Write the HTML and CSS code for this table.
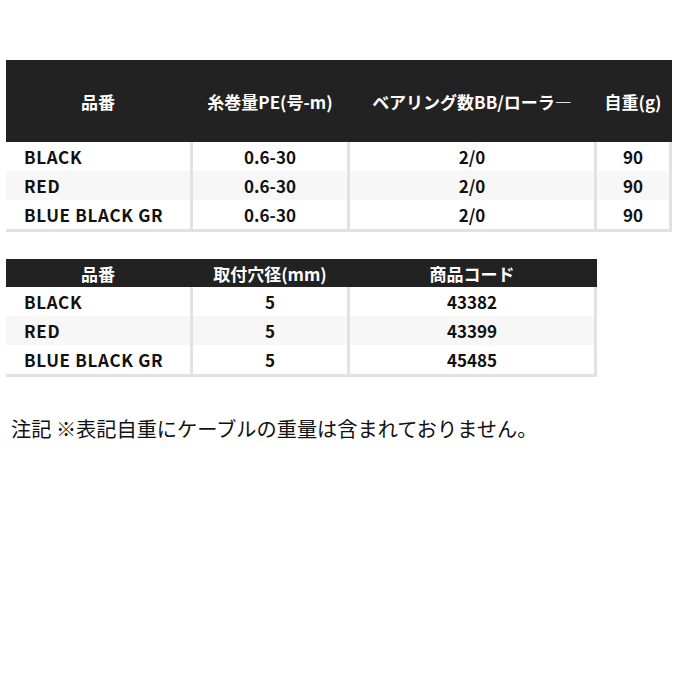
FILE: index.html
```html
<!DOCTYPE html>
<html lang="ja">
<head>
<meta charset="utf-8">
<link rel="stylesheet" href="styles.css">
</head>
<body>
<div class="page">
  <div class="spec spec-main">
    <div class="row head tall">
      <div class="cell">品番</div>
      <div class="cell">糸巻量PE(号-m)</div>
      <div class="cell">ベアリング数BB/ローラ―</div>
      <div class="cell">自重(g)</div>
    </div>
    <div class="row">
      <div class="cell name">BLACK</div>
      <div class="cell">0.6-30</div>
      <div class="cell">2/0</div>
      <div class="cell">90</div>
    </div>
    <div class="row alt">
      <div class="cell name">RED</div>
      <div class="cell">0.6-30</div>
      <div class="cell">2/0</div>
      <div class="cell">90</div>
    </div>
    <div class="row">
      <div class="cell name">BLUE BLACK GR</div>
      <div class="cell">0.6-30</div>
      <div class="cell">2/0</div>
      <div class="cell">90</div>
    </div>
  </div>

  <div class="spec spec-code">
    <div class="row head">
      <div class="cell">品番</div>
      <div class="cell">取付穴径(mm)</div>
      <div class="cell">商品コード</div>
    </div>
    <div class="row">
      <div class="cell name">BLACK</div>
      <div class="cell">5</div>
      <div class="cell">43382</div>
    </div>
    <div class="row alt">
      <div class="cell name">RED</div>
      <div class="cell">5</div>
      <div class="cell">43399</div>
    </div>
    <div class="row">
      <div class="cell name">BLUE BLACK GR</div>
      <div class="cell">5</div>
      <div class="cell">45485</div>
    </div>
  </div>

  <p class="note">注記 ※表記自重にケーブルの重量は含まれておりません。</p>
</div>
</body>
</html>
```

FILE: styles.css
```css
html, body {
  margin: 0;
  padding: 0;
  background: #ffffff;
}

.page {
  padding: 60px 0 0 6px;
  font-family: "Noto Sans CJK JP", "Noto Sans", sans-serif;
  color: #111111;
}

.spec {
  border-bottom: 3px solid #e2e2e2;
}

.spec-main {
  width: 666px;
}

.spec-code {
  width: 591px;
  margin-top: 27px;
}

.row {
  display: grid;
  height: 29px;
}

.spec-main .row {
  grid-template-columns: 187px 157px 247px 75px;
}

.spec-code .row {
  grid-template-columns: 187px 157px 247px;
}

.cell {
  box-sizing: border-box;
  border-right: 3px solid #e2e2e2;
  display: flex;
  align-items: center;
  justify-content: center;
  font-size: 17px;
  font-weight: 700;
  line-height: 1;
  white-space: nowrap;
}

.cell.name {
  justify-content: flex-start;
  padding-left: 18px;
  letter-spacing: 0.7px;
}

.row.alt {
  background: #f7f7f7;
}

.row.head {
  background: #222222;
  color: #ffffff;
  height: 28px;
}

.row.head.tall {
  height: 82px;
}

.row.head .cell {
  border-right-color: #222222;
}

.note {
  margin: 38px 0 0 5px;
  font-size: 20.2px;
  font-weight: 400;
  color: #111111;
  line-height: 1.4;
}
```
